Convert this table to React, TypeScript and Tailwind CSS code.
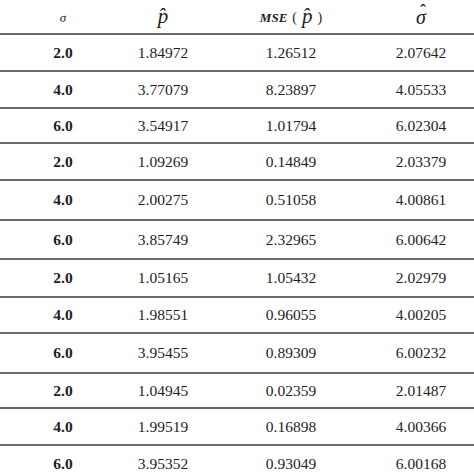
const rows = [
  { s: "2.0", p: "1.84972", mse: "1.26512", sh: "2.07642", h: "h-[37px]" },
  { s: "4.0", p: "3.77079", mse: "8.23897", sh: "4.05533", h: "h-[37px]" },
  { s: "6.0", p: "3.54917", mse: "1.01794", sh: "6.02304", h: "h-[35px]" },
  { s: "2.0", p: "1.09269", mse: "0.14849", sh: "2.03379", h: "h-[37px]" },
  { s: "4.0", p: "2.00275", mse: "0.51058", sh: "4.00861", h: "h-[40px]" },
  { s: "6.0", p: "3.85749", mse: "2.32965", sh: "6.00642", h: "h-[39px]" },
  { s: "2.0", p: "1.05165", mse: "1.05432", sh: "2.02979", h: "h-[38px]" },
  { s: "4.0", p: "1.98551", mse: "0.96055", sh: "4.00205", h: "h-[36px]" },
  { s: "6.0", p: "3.95455", mse: "0.89309", sh: "6.00232", h: "h-[40px]" },
  { s: "2.0", p: "1.04945", mse: "0.02359", sh: "2.01487", h: "h-[35px]" },
  { s: "4.0", p: "1.99519", mse: "0.16898", sh: "4.00366", h: "h-[37px]" },
  { s: "6.0", p: "3.95352", mse: "0.93049", sh: "6.00168", h: "h-[37px]" },
];

const grid = "grid grid-cols-[126px_74px_182px_92px] items-center";

export default function App() {
  return (
    <div className="w-[474px] h-[474px] overflow-hidden bg-white text-[#1e1e1e] font-['Liberation_Serif',serif]">
      {/* header */}
      <div className={`${grid} h-[35px] border-b-2 border-[#6a6a6a] text-center leading-none`}>
        <div className="italic text-[13px] pt-[2px]">σ</div>
        <div className="italic text-[21px]">{"p\u0302"}</div>
        <div className="flex items-center justify-center gap-[5px]">
          <span className="italic font-bold text-[13px] pt-[2px]">MSE</span>
          <span className="text-[14px] pt-[2px]">(</span>
          <span className="italic text-[21px]">{"p\u0302"}</span>
          <span className="text-[14px] pt-[2px]">)</span>
        </div>
        <div className="pr-[14px]">
          <span className="relative inline-block italic text-[20px]">
            σ
            <span className="absolute left-[4px] top-[-5px] not-italic text-[18px]">ˆ</span>
          </span>
        </div>
      </div>

      {/* data rows */}
      {rows.map((r, i) => (
        <div
          key={i}
          className={`${grid} ${r.h} border-b-2 border-[#6a6a6a] text-center text-[15.5px]`}
        >
          <div className="font-bold">{r.s}</div>
          <div>{r.p}</div>
          <div>{r.mse}</div>
          <div className="pr-[14px]">{r.sh}</div>
        </div>
      ))}
    </div>
  );
}
